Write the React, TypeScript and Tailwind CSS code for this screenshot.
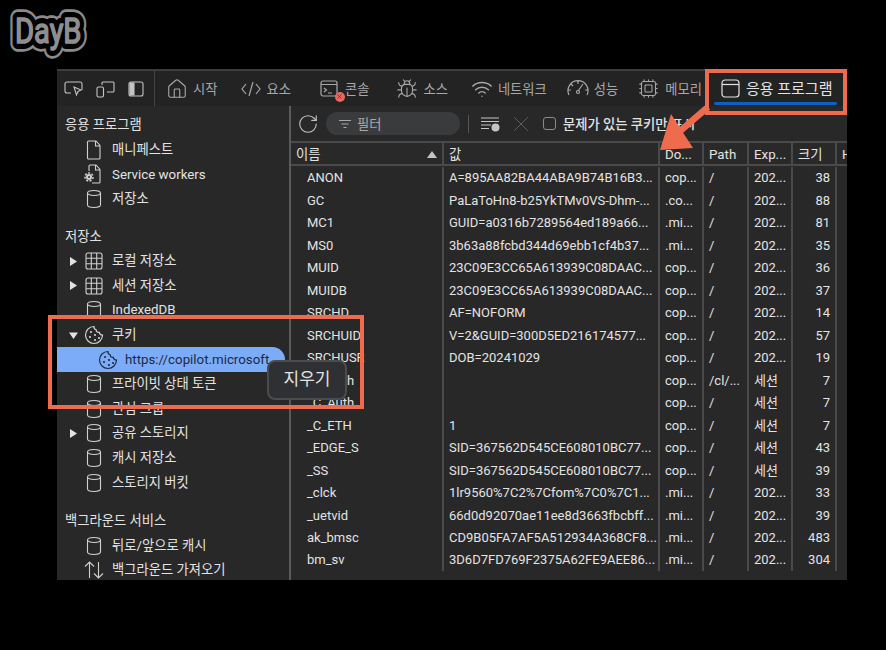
import { Bug, Cpu, Home, RotateCw, Wifi, X } from "lucide-react";

const font = { fontFamily: 'Roboto, "Noto Sans CJK KR", sans-serif' };

type Row = [string, string, string, string, string, string];

const rows: Row[] = [
  ["ANON", "A=895AA82BA44ABA9B74B16B3...", "cop...", "/", "202...", "38"],
  ["GC", "PaLaToHn8-b25YkTMv0VS-Dhm-...", ".co...", "/", "202...", "88"],
  ["MC1", "GUID=a0316b7289564ed189a66...", ".mi...", "/", "202...", "81"],
  ["MS0", "3b63a88fcbd344d69ebb1cf4b37...", ".mi...", "/", "202...", "35"],
  ["MUID", "23C09E3CC65A613939C08DAAC...", "cop...", "/", "202...", "36"],
  ["MUIDB", "23C09E3CC65A613939C08DAAC...", "cop...", "/", "202...", "37"],
  ["SRCHD", "AF=NOFORM", "cop...", "/", "202...", "14"],
  ["SRCHUID", "V=2&GUID=300D5ED216174577...", "cop...", "/", "202...", "57"],
  ["SRCHUSR", "DOB=20241029", "cop...", "/", "202...", "19"],
  ["_C_Auth", "", "cop...", "/cl/...", "세션", "7"],
  ["_C_Auth", "", "cop...", "/", "세션", "7"],
  ["_C_ETH", "1", "cop...", "/", "세션", "7"],
  ["_EDGE_S", "SID=367562D545CE608010BC77...", "cop...", "/", "세션", "43"],
  ["_SS", "SID=367562D545CE608010BC77...", "cop...", "/", "세션", "39"],
  ["_clck", "1lr9560%7C2%7Cfom%7C0%7C1...", ".mi...", "/", "202...", "33"],
  ["_uetvid", "66d0d92070ae11ee8d3663fbcbff...", ".mi...", "/", "202...", "39"],
  ["ak_bmsc", "CD9B05FA7AF5A512934A368CF8...", ".mi...", "/", "202...", "483"],
  ["bm_sv", "3D6D7FD769F2375A62FE9AEE86...", ".mi...", "/", "202...", "304"],
];

const cols = "grid grid-cols-[153px_216px_44px_45px_44px_44px_44px]";
const headCell = "flex items-center border-r-2 border-[#4a4a4a] pl-[5px] pt-[2px]";

function Caret({ open }: { open?: boolean }) {
  return (
    <svg width="9" height="9" viewBox="0 0 9 9" className="shrink-0 fill-[#e3e3e3]">
      {open ? <path d="M0 1.500h9L4.500 8z" /> : <path d="M1 0l7 4.500L1 9z" />}
    </svg>
  );
}

// sidebar icons, all on a 20x20 box
const stroke = { fill: "none", stroke: "#d0d0d0", strokeWidth: 1.1 };

const Cylinder = () => (
  <svg width="20" height="20" viewBox="0 0 20 20" {...stroke}>
    <ellipse cx="10" cy="4" rx="6.500" ry="2.500" />
    <path d="M3.500 4v12c0 1.500 3 2.500 6.500 2.500s6.500-1 6.500-2.500V4" />
  </svg>
);

const FileIcon = () => (
  <svg width="20" height="20" viewBox="0 0 20 20" {...stroke}>
    <path d="M4.500 1h7.500l4 4.500V18a1 1 0 0 1-1 1H4.500a1 1 0 0 1-1-1V2a1 1 0 0 1 1-1z" />
    <path d="M11.500 1v5h4.500" />
  </svg>
);

const WorkerIcon = () => (
  <svg width="20" height="20" viewBox="0 0 20 20" {...stroke}>
    <path d="M5 7V2a1 1 0 0 1 1-1h6l4 4.500V18a1 1 0 0 1-1 1H8" />
    <path d="M11.500 1v5h4.500" />
    <circle cx="5" cy="13" r="3" fill="#d0d0d0" stroke="none" />
    <circle cx="5" cy="13" r="4" stroke="#d0d0d0" strokeWidth="1.500" strokeDasharray="2 1.500" />
    <circle cx="5" cy="13" r="1" fill="#282828" stroke="none" />
  </svg>
);

const GridIcon = () => (
  <svg width="20" height="20" viewBox="0 0 20 20" {...stroke}>
    <rect x="2" y="2" width="16" height="16" rx="2" />
    <path d="M7.300 2v16M12.700 2v16M2 7.300h16M2 12.700h16" />
  </svg>
);

const CookieIcon = ({ color = "#d0d0d0" }: { color?: string }) => (
  <svg width="20" height="20" viewBox="0 0 20 20" fill="none" stroke={color} strokeWidth="1.200">
    <path d="M10 1.500a8.500 8.500 0 1 0 8.500 8.500 3 3 0 0 1-3.200-2.600 3 3 0 0 1-3.200-2.700A3 3 0 0 1 10 1.500z" />
    <g fill={color} stroke="none">
      <circle cx="7" cy="7" r="1.100" />
      <circle cx="6" cy="12" r="1.100" />
      <circle cx="11" cy="10" r="1.100" />
      <circle cx="11" cy="15" r="1.100" />
      <circle cx="15" cy="13" r="1.100" />
    </g>
  </svg>
);

const FetchIcon = () => (
  <svg width="20" height="20" viewBox="0 0 20 20" {...stroke}>
    <path d="M5.500 18V2M1 6.500L5.500 2 10 6.500M14.500 2v16M10 13.500l4.500 4.500 4.500-4.500" />
  </svg>
);

function SideRow({ icon, label, caret, open }: { icon: React.ReactNode; label: string; caret?: boolean; open?: boolean }) {
  return (
    <div className="flex h-[24.6px] items-center">
      <div className="flex w-[27px] justify-end pr-[6px]">{caret && <Caret open={open} />}</div>
      <div className="w-[28px] shrink-0">{icon}</div>
      <span className="whitespace-nowrap">{label}</span>
    </div>
  );
}

function Section({ label }: { label: string }) {
  return <div className="flex h-[24.6px] items-center pl-[8px]">{label}</div>;
}

export default function App() {
  return (
    <div className="relative h-[650px] w-[886px] overflow-hidden bg-black pl-[8px] pt-[8px]" style={font}>
      {/* logo */}
      <svg width="80" height="50" viewBox="0 0 80 50" className="block overflow-visible">
        <g fontFamily='"Liberation Sans Narrow", "Roboto", sans-serif' fontSize="33" strokeLinejoin="round" transform="translate(7 34.500) scale(0.880 1.080)">
          <text fill="#8a8a8a" stroke="#8a8a8a" strokeWidth="16">DayB</text>
          <text fill="#000" stroke="#000" strokeWidth="11">DayB</text>
          <text fill="#8f8f8f" stroke="#8f8f8f" strokeWidth="1.500">DayB</text>
        </g>
      </svg>

      {/* devtools window */}
      <div className="ml-[49px] mt-[11px] flex h-[511px] w-[790px] flex-col overflow-hidden border-t-2 border-[#3d3d3d] bg-[#282828] text-[13.300px] text-[#e3e3e3]">
        {/* tabs */}
        <div className="flex h-[35px] shrink-0 items-center bg-[#232323] text-[#a8a8a8]">
          <div className="flex h-full w-[98px] shrink-0 items-center gap-[12px] border-r border-[#444] pl-[7px] text-[#c4c4c4]">
            <svg width="20" height="18" viewBox="0 0 20 18" fill="none" stroke="currentColor" strokeWidth="1.100">
              <path d="M7 13H3a2 2 0 0 1-2-2V4a2 2 0 0 1 2-2h13a2 2 0 0 1 2 2v6" />
              <path d="M10 7l7 3-3 1.500-1.500 3.500z" />
            </svg>
            <svg width="20" height="18" viewBox="0 0 20 18" fill="none" stroke="currentColor" strokeWidth="1.100">
              <path d="M6 5V3a1 1 0 0 1 1-1h10a1 1 0 0 1 1 1v8a1 1 0 0 1-1 1h-6" />
              <rect x="1" y="7" width="6.500" height="10" rx="1.500" />
            </svg>
            <svg width="16" height="16" viewBox="0 0 16 16" fill="none" stroke="currentColor" strokeWidth="1.100">
              <rect x="1" y="1" width="14" height="14" rx="2" />
              <path d="M2 2h4v12H2z" fill="currentColor" />
            </svg>
          </div>
          <div className="flex h-full items-center pl-[11px]">
            <Home size={22} strokeWidth={1.2} className="mr-[5px] shrink-0" />
            <span className="pt-[2px]">시작</span>
            <svg width="20" height="18" viewBox="0 0 20 18" fill="none" stroke="currentColor" strokeWidth="1.200" className="ml-[24px] mr-[5px] shrink-0">
              <path d="M5 4L1 9l4 5M15 4l4 5-4 5M12 2L8 16" />
            </svg>
            <span className="pt-[2px]">요소</span>
            <div className="relative ml-[29px] mr-[7px] shrink-0">
              <svg width="18" height="18" viewBox="0 0 18 18" fill="none" stroke="currentColor" strokeWidth="1.200" className="block">
                <rect x="1" y="1" width="16" height="15" rx="2" />
                <path d="M1 4.500h16M4 8l2.500 2L4 12M8 13h4" />
              </svg>
              <span className="absolute left-[15px] top-[12px] flex h-[10px] w-[10px] items-center justify-center rounded-full bg-[#e46962]">
                <X size={7} strokeWidth={2} className="text-[#5c1a16]" />
              </span>
            </div>
            <span className="pt-[2px]">콘솔</span>
            <Bug size={22} strokeWidth={1.2} className="ml-[27px] mr-[5px] shrink-0" />
            <span className="pt-[2px]">소스</span>
            <Wifi size={22} strokeWidth={1.6} className="ml-[23px] mr-[5px] shrink-0" />
            <span className="whitespace-nowrap pt-[2px]">네트워크</span>
            <svg width="24" height="20" viewBox="0 0 24 20" fill="none" stroke="currentColor" strokeWidth="1.200" className="ml-[19px] mr-[4px] shrink-0">
              <path d="M3 16A10 10 0 1 1 21 16M12 12l5-7M2 11h3M19 11h3M5 5l2 2M12 2v3" />
              <circle cx="12" cy="13" r="1.500" />
            </svg>
            <span className="pt-[2px]">성능</span>
            <Cpu size={21} strokeWidth={1.2} className="ml-[20px] mr-[6px] shrink-0" />
            <span className="whitespace-nowrap pt-[2px]">메모리</span>
            <svg width="19" height="19" viewBox="0 0 19 19" fill="none" stroke="#e3e3e3" strokeWidth="1.200" className="ml-[19px] mr-[6px] shrink-0">
              <rect x="1" y="1" width="17" height="17" rx="3" />
              <path d="M1 5.500h17" />
            </svg>
            <span className="whitespace-nowrap pt-[2px] text-[15px] text-[#e3e3e3]">응용 프로그램</span>
          </div>
        </div>

        <div className="flex min-h-0 flex-1">
          {/* sidebar */}
          <div className="w-[232px] shrink-0 overflow-hidden pt-[7px]">
            <Section label="응용 프로그램" />
            <SideRow icon={<FileIcon />} label="매니페스트" />
            <SideRow icon={<WorkerIcon />} label="Service workers" />
            <SideRow icon={<Cylinder />} label="저장소" />
            <div className="h-[13px]" />
            <Section label="저장소" />
            <SideRow caret icon={<GridIcon />} label="로컬 저장소" />
            <SideRow caret icon={<GridIcon />} label="세션 저장소" />
            <SideRow icon={<Cylinder />} label="IndexedDB" />
            <SideRow caret open icon={<CookieIcon />} label="쿠키" />
            <div className="mr-[4px] flex h-[24.6px] items-center rounded-r-full bg-[#7cacf8] pl-[41px] text-[#1b2b46]">
              <div className="mr-[7px] shrink-0">
                <CookieIcon color="#1b2b46" />
              </div>
              <span className="whitespace-nowrap">https://copilot.microsoft</span>
            </div>
            <SideRow icon={<Cylinder />} label="프라이빗 상태 토큰" />
            <SideRow icon={<Cylinder />} label="관심 그룹" />
            <SideRow caret icon={<Cylinder />} label="공유 스토리지" />
            <SideRow icon={<Cylinder />} label="캐시 저장소" />
            <SideRow icon={<Cylinder />} label="스토리지 버킷" />
            <div className="h-[14px]" />
            <Section label="백그라운드 서비스" />
            <SideRow icon={<Cylinder />} label="뒤로/앞으로 캐시" />
            <SideRow icon={<FetchIcon />} label="백그라운드 가져오기" />
          </div>

          {/* main */}
          <div className="flex min-w-0 flex-1 flex-col overflow-hidden border-l-2 border-[#5a5a5a]">
            <div className="flex h-[35px] shrink-0 items-center pl-[6px]">
              <RotateCw size={22} strokeWidth={1.2} className="text-[#c4c4c4]" />
              <div className="ml-[7px] flex h-[23px] w-[134px] items-center rounded-full bg-[#3a3b3d] pl-[12px] text-[#a8a8a8]">
                <svg width="14" height="10" viewBox="0 0 14 10" fill="none" stroke="currentColor" strokeWidth="1.100">
                  <path d="M1 1.500h12M3.500 5h7M5.500 8.500h3" />
                </svg>
                <span className="ml-[5px] pt-[2px]">필터</span>
              </div>
              <div className="ml-[8px] h-[18px] w-px bg-[#555]" />
              <svg width="20" height="16" viewBox="0 0 20 16" className="ml-[11px] text-[#c4c4c4]" fill="none" stroke="currentColor" strokeWidth="1.100">
                <path d="M1 2h18M1 5.500h18M1 9h10M1 12.500h8" />
                <circle cx="15.500" cy="11.500" r="4" fill="currentColor" stroke="none" />
              </svg>
              <X size={26} strokeWidth={0.8} className="ml-[8px] text-[#666]" />
              <span className="ml-[9px] h-[13px] w-[13px] rounded-[3px] border border-[#8a8a8a]" />
              <span className="ml-[7px] whitespace-nowrap pt-[2px] font-medium">문제가 있는 쿠키만 표시</span>
            </div>

            {/* cookies table */}
            <div className={`${cols} h-[25px] shrink-0 border-y-2 border-[#4a4a4a] bg-[#292929]`}>
              <div className={`${headCell} justify-between pr-[5px]`}>
                <span>이름</span>
                <svg width="10" height="7" viewBox="0 0 10 7" className="fill-[#c4c4c4]">
                  <path d="M5 0l5 7H0z" />
                </svg>
              </div>
              <div className={headCell}>값</div>
              <div className={headCell}>Do...</div>
              <div className={headCell}>Path</div>
              <div className={headCell}>Exp...</div>
              <div className={headCell}>크기</div>
              <div className="flex items-center pl-[5px] pt-[2px]">H</div>
            </div>
            <div className="min-h-0 flex-1 overflow-hidden pt-[1px] text-[13px]">
              <div className={`${cols} h-full`} style={{ gridTemplateRows: "repeat(18, 22.47px)" }}>
                {rows.map((r, i) => (
                  <div key={i} className="contents">
                    <div className="flex items-center border-r-2 border-[#4a4a4a] pl-[16px]">{r[0]}</div>
                    <div className="flex items-center overflow-hidden whitespace-nowrap border-r-2 border-[#4a4a4a] pl-[5px]">{r[1]}</div>
                    <div className="flex items-center border-r-2 border-[#4a4a4a] pl-[5px]">{r[2]}</div>
                    <div className="flex items-center border-r-2 border-[#4a4a4a] pl-[5px]">{r[3]}</div>
                    <div className="flex items-center border-r-2 border-[#4a4a4a] pl-[5px]">{r[4]}</div>
                    <div className="flex items-center justify-end border-r-2 border-[#4a4a4a] pr-[5px]">{r[5]}</div>
                    <div />
                  </div>
                ))}
              </div>
            </div>
          </div>
        </div>
      </div>

      {/* tooltip */}
      <div className="absolute left-[267px] top-[360px] flex h-[40px] w-[80px] items-center justify-center rounded-lg border-2 border-[#4c4c4c] bg-[#2e3033] text-[17px] text-[#e3e3e3]">
        지우기
      </div>

      {/* annotations */}
      <div className="absolute left-[714px] top-[102px] h-[3px] w-[123px] rounded-full bg-[#0b62c4]" />
      <div className="absolute left-[705px] top-[69px] h-[46px] w-[142px] border-[4px] border-[#ee6c4d]" />
      <div className="absolute left-[48px] top-[315px] h-[94px] w-[316px] border-[4px] border-[#ee6c4d]" />
      <svg width="62" height="50" viewBox="0 0 62 50" className="absolute left-[650px] top-[105px]">
        <path d="M58 2L22 33" stroke="#ee6c4d" strokeWidth="6.500" />
        <path d="M10 45L21 9L43 43z" fill="#ee6c4d" />
      </svg>
    </div>
  );
}
